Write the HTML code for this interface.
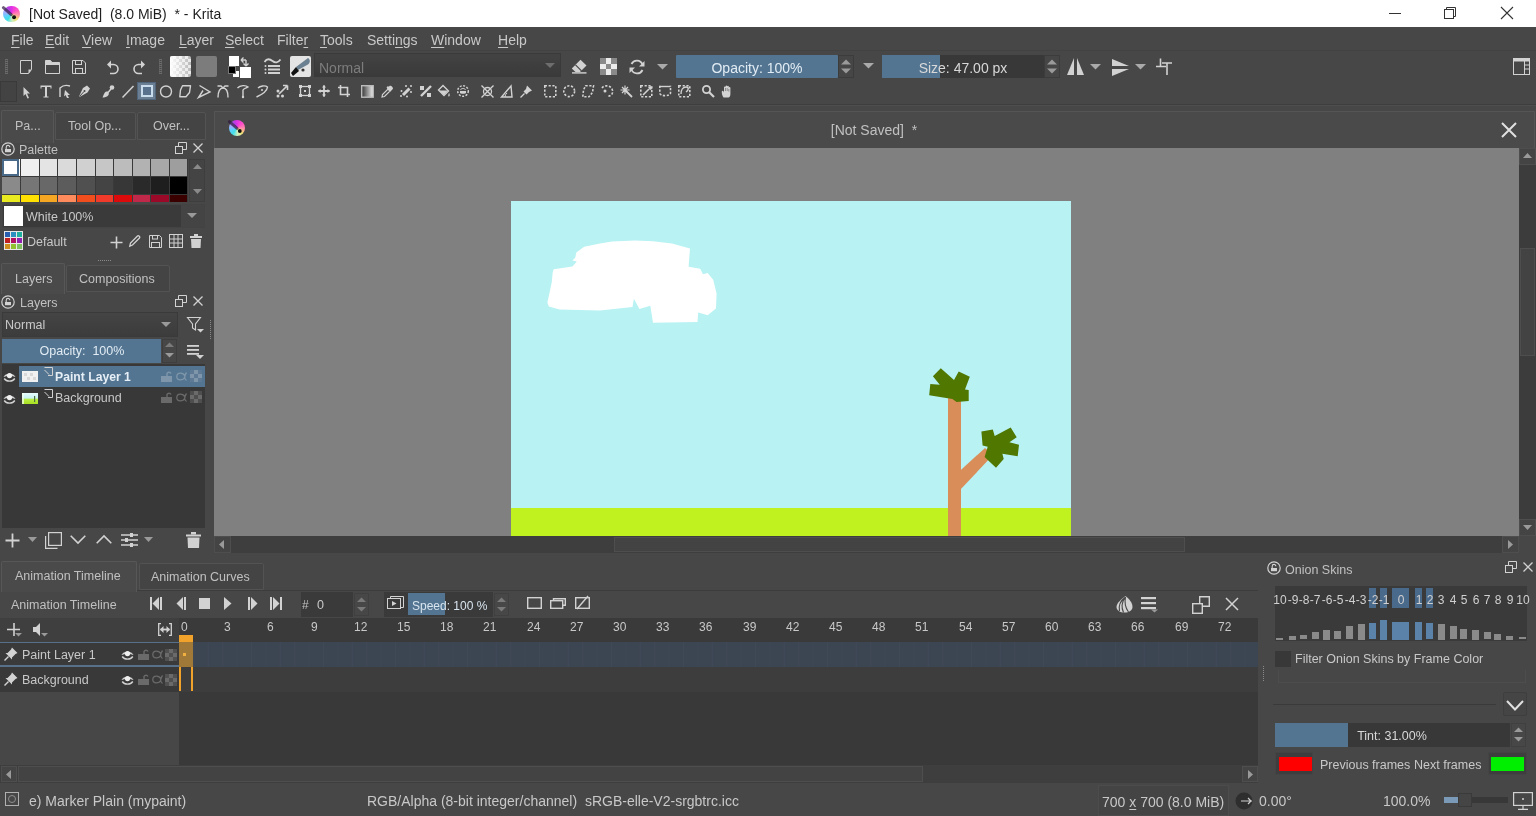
<!DOCTYPE html>
<html><head><meta charset="utf-8">
<style>
*{box-sizing:border-box;margin:0;padding:0}
html,body{width:1536px;height:816px;overflow:hidden;background:#474747;font-family:"Liberation Sans",sans-serif;color:#c8c8c8;font-size:13px;position:relative}
.a{position:absolute}
.t{position:absolute;white-space:nowrap;line-height:1;will-change:transform}
svg{position:absolute;overflow:visible}
u{text-decoration:underline;text-decoration-thickness:1px;text-underline-offset:1.5px}
</style></head><body>
<div class="a" style="left:0px;top:0px;width:1536px;height:27px;background:#ffffff;"></div>
<div class="a" style="left:3.4000000000000004px;top:5.700000000000001px;width:16.4px;height:16.4px;background:conic-gradient(from 0deg,#e030e8 0deg,#ff50c8 50deg,#ff90a8 95deg,#f0e070 135deg,#d0f0c0 175deg,#40e0e8 215deg,#60d0ff 250deg,#a8a8ff 290deg,#b040e0 330deg,#e030e8 360deg);border-radius:50%"></div>
<svg style="left:3.4000000000000004px;top:5.700000000000001px;" width="16.4" height="16.4" viewBox="0 0 16.4 16.4"><line x1="0.41" y1="1.64" x2="8.2" y2="8.61" stroke="#301840" stroke-width="2.9519999999999995" stroke-linecap="round" opacity="0.7"/><circle cx="11.07" cy="11.315999999999999" r="1.9679999999999997" fill="#101010"/></svg>
<div class="t" style="left:29px;top:6.95px;font-size:14px;color:#1e1e1e;">[Not Saved]&nbsp; (8.0 MiB)&nbsp; * - Krita</div>
<svg style="left:1389px;top:12px;" width="13" height="2" viewBox="0 0 13 2"><rect x="0" y="1" width="12" height="1" fill="#333"/></svg>
<svg style="left:1444px;top:7px;" width="12" height="12" viewBox="0 0 12 12"><rect x="0.5" y="2.5" width="9" height="9" fill="none" stroke="#333"/><path d="M2.5 2.5V0.5H11.5V9.5H9.5" fill="none" stroke="#333"/></svg>
<svg style="left:1501px;top:7px;" width="12" height="12" viewBox="0 0 12 12"><path d="M0 0L12 12M12 0L0 12" stroke="#333" stroke-width="1.1"/></svg>
<div class="a" style="left:0px;top:27px;width:1536px;height:24px;background:#474747;"></div>
<div class="a" style="left:0px;top:50px;width:1536px;height:1px;background:#424242;"></div>
<div class="t" style="left:11px;top:32.95px;font-size:14px;color:#c8c8c8;"><u>F</u>ile</div>
<div class="t" style="left:45px;top:32.95px;font-size:14px;color:#c8c8c8;"><u>E</u>dit</div>
<div class="t" style="left:82px;top:32.95px;font-size:14px;color:#c8c8c8;"><u>V</u>iew</div>
<div class="t" style="left:126px;top:32.95px;font-size:14px;color:#c8c8c8;"><u>I</u>mage</div>
<div class="t" style="left:179px;top:32.95px;font-size:14px;color:#c8c8c8;"><u>L</u>ayer</div>
<div class="t" style="left:225px;top:32.95px;font-size:14px;color:#c8c8c8;"><u>S</u>elect</div>
<div class="t" style="left:277px;top:32.95px;font-size:14px;color:#c8c8c8;">Filte<u>r</u></div>
<div class="t" style="left:320px;top:32.95px;font-size:14px;color:#c8c8c8;"><u>T</u>ools</div>
<div class="t" style="left:367px;top:32.95px;font-size:14px;color:#c8c8c8;">Setti<u>n</u>gs</div>
<div class="t" style="left:431px;top:32.95px;font-size:14px;color:#c8c8c8;"><u>W</u>indow</div>
<div class="t" style="left:498px;top:32.95px;font-size:14px;color:#c8c8c8;"><u>H</u>elp</div>
<svg style="left:5px;top:59px;" width="4" height="15" viewBox="0 0 4 15"><rect x="0" y="0" width="1" height="15" fill="#5a5a5a"/><rect x="2" y="0" width="1" height="15" fill="#5a5a5a"/><rect x="0" y="0" width="3" height="1" fill="#6a6a6a"/><rect x="0" y="2" width="3" height="1" fill="#6a6a6a"/><rect x="0" y="4" width="3" height="1" fill="#6a6a6a"/><rect x="0" y="6" width="3" height="1" fill="#6a6a6a"/><rect x="0" y="8" width="3" height="1" fill="#6a6a6a"/><rect x="0" y="10" width="3" height="1" fill="#6a6a6a"/><rect x="0" y="12" width="3" height="1" fill="#6a6a6a"/><rect x="0" y="14" width="3" height="1" fill="#6a6a6a"/></svg>
<svg style="left:20px;top:60px;" width="12" height="14" viewBox="0 0 12 14"><path d="M0.5 0.5H11.5V9.5L8.5 13.5H0.5Z" fill="none" stroke="#d2d2d2"/><path d="M11.5 9.5H8.5V13.5Z" fill="#d2d2d2"/></svg>
<svg style="left:45px;top:60px;" width="15" height="14" viewBox="0 0 15 14"><path d="M0.5 0.5H5.5L7 2.5H14.5V13.5H0.5Z" fill="none" stroke="#d2d2d2"/><path d="M0.5 0.5H5.5L7 2.5H14.5V5H0.5Z" fill="#d2d2d2"/></svg>
<svg style="left:72px;top:60px;" width="14" height="14" viewBox="0 0 14 14"><path d="M0.5 0.5H11L13.5 3V13.5H0.5Z" fill="none" stroke="#d2d2d2"/><rect x="3.5" y="0.5" width="6" height="4" fill="none" stroke="#d2d2d2"/><rect x="3.5" y="8.5" width="7" height="5" fill="none" stroke="#d2d2d2"/></svg>
<svg style="left:107px;top:60px;" width="12" height="14" viewBox="0 0 12 14"><path d="M2.5 4.5H6.5A4.5 4.5 0 0 1 6.5 13.5H3" fill="none" stroke="#d2d2d2" stroke-width="1.6"/><path d="M0 4.5L4 0.5V8.5Z" fill="#d2d2d2"/></svg>
<svg style="left:133px;top:60px;" width="12" height="14" viewBox="0 0 12 14"><path d="M9.5 4.5H5.5A4.5 4.5 0 0 0 5.5 13.5H9" fill="none" stroke="#d2d2d2" stroke-width="1.6"/><path d="M12 4.5L8 0.5V8.5Z" fill="#d2d2d2"/></svg>
<svg style="left:159px;top:59px;" width="4" height="15" viewBox="0 0 4 15"><rect x="0" y="0" width="1" height="15" fill="#5a5a5a"/><rect x="2" y="0" width="1" height="15" fill="#5a5a5a"/><rect x="0" y="0" width="3" height="1" fill="#6a6a6a"/><rect x="0" y="2" width="3" height="1" fill="#6a6a6a"/><rect x="0" y="4" width="3" height="1" fill="#6a6a6a"/><rect x="0" y="6" width="3" height="1" fill="#6a6a6a"/><rect x="0" y="8" width="3" height="1" fill="#6a6a6a"/><rect x="0" y="10" width="3" height="1" fill="#6a6a6a"/><rect x="0" y="12" width="3" height="1" fill="#6a6a6a"/><rect x="0" y="14" width="3" height="1" fill="#6a6a6a"/></svg>
<svg style="left:170px;top:56px;" width="21" height="21" viewBox="0 0 21 21"><defs><pattern id="chk" width="6" height="6" patternUnits="userSpaceOnUse"><rect width="6" height="6" fill="#e8e8e8"/><rect width="3" height="3" fill="#b8b8b8"/><rect x="3" y="3" width="3" height="3" fill="#b8b8b8"/></pattern>
<linearGradient id="gw" x1="0" x2="1"><stop offset="0" stop-color="#fff"/><stop offset="1" stop-color="#fff" stop-opacity="0"/></linearGradient></defs>
<rect width="21" height="21" rx="2" fill="url(#chk)"/><rect width="21" height="21" rx="2" fill="url(#gw)"/></svg>
<div class="a" style="left:196px;top:56px;width:21px;height:21px;background:#7c7c7c;border-radius:2px"></div>
<div class="a" style="left:229px;top:56px;width:10px;height:10px;background:#ffffff;"></div>
<div class="a" style="left:240px;top:67px;width:11px;height:11px;background:#ffffff;"></div>
<div class="a" style="left:233px;top:71px;width:6px;height:6px;background:#ffffff;"></div>
<div class="a" style="left:229px;top:67px;width:6px;height:6px;background:#000000;outline:1px solid #777"></div>
<svg style="left:240px;top:57px;" width="10" height="10" viewBox="0 0 10 10"><path d="M1 3H6M1 3L3.5 0.5M1 3L3.5 5.5" stroke="#d2d2d2" stroke-width="1.4" fill="none"/><path d="M6 3V9M6 9L3.5 6.5M6 9L8.5 6.5" stroke="#d2d2d2" stroke-width="1.4" fill="none"/></svg>
<svg style="left:264px;top:58px;" width="17" height="17" viewBox="0 0 17 17"><path d="M0.5 4C3 0 6 1 8.5 3S14 5 16.5 1.5" stroke="#d2d2d2" stroke-width="1.8" fill="none"/><circle cx="1.5" cy="8" r="1" fill="#d2d2d2"/><circle cx="1.5" cy="11.5" r="1" fill="#d2d2d2"/><circle cx="1.5" cy="15" r="1" fill="#d2d2d2"/><rect x="4" y="7" width="12" height="2" fill="#d2d2d2"/><rect x="4" y="10.5" width="12" height="2" fill="#d2d2d2"/><rect x="4" y="14" width="12" height="2" fill="#d2d2d2"/></svg>
<svg style="left:290px;top:56px;" width="21" height="21" viewBox="0 0 21 21"><rect width="21" height="21" rx="2" fill="#e4e4e4"/><path d="M18 2C21 4 20 8 17 9L8 14L6 11Z" fill="#6b8090"/><path d="M6 11L9 15L3 20L1 17Z" fill="#111"/><circle cx="13" cy="14" r="1.6" fill="#333"/></svg>
<div class="a" style="left:314px;top:53px;width:247px;height:24px;background:linear-gradient(#434343,#3a3a3a);border:1px solid #3a3a3a"></div>
<div class="t" style="left:319px;top:60.95px;font-size:14px;color:#7d7d7d;">Normal</div>
<svg style="left:545px;top:63px;" width="10" height="6" viewBox="0 0 10 6"><path d="M0 0H10L5 5Z" fill="#6e6e6e"/></svg>
<svg style="left:571px;top:59px;" width="16" height="15" viewBox="0 0 16 15"><path d="M0.8 9.5L9.5 0.8L15.5 6.5L9 13H4.5Z" fill="#d2d2d2"/><path d="M4.5 5.8L10.5 11.8" stroke="#474747" stroke-width="1.2"/><rect x="1" y="13.2" width="14.5" height="1.4" fill="#d2d2d2"/></svg>
<svg style="left:600px;top:58px;" width="17" height="17" viewBox="0 0 17 17"><rect width="17" height="17" fill="#ececec"/><rect x="0" y="0" width="6" height="6" fill="#8a8a8a"/><rect x="11" y="0" width="6" height="6" fill="#8a8a8a"/><rect x="6" y="6" width="5" height="5" fill="#8a8a8a"/><rect x="0" y="11" width="6" height="6" fill="#8a8a8a"/><rect x="11" y="11" width="6" height="6" fill="#8a8a8a"/></svg>
<svg style="left:629px;top:59px;" width="16" height="16" viewBox="0 0 16 16"><path d="M13.5 5.5A6 6 0 0 0 2.5 5" stroke="#d2d2d2" stroke-width="1.8" fill="none"/><path d="M2.5 10.5A6 6 0 0 0 13.5 11" stroke="#d2d2d2" stroke-width="1.8" fill="none"/><path d="M15.5 2V7.5H10Z" fill="#d2d2d2"/><path d="M0.5 14V8.5H6Z" fill="#d2d2d2"/></svg>
<svg style="left:657px;top:64px;" width="11" height="6" viewBox="0 0 11 6"><path d="M0 0H11L5.5 5.5Z" fill="#aaaaaa"/></svg>
<div class="a" style="left:676px;top:55px;width:162px;height:23px;background:#537591;border-radius:1px"></div>
<div class="t" style="left:457px;width:600px;text-align:center;top:60.65px;font-size:14px;color:#e2ecf4;">Opacity: 100%</div>
<div class="a" style="left:838px;top:55px;width:16px;height:23px;background:#464646;border:1px solid #3c3c3c"></div>
<svg style="left:841px;top:59.0px;" width="10" height="15" viewBox="0 0 10 15"><path d="M0 5.5L5 0.5L10 5.5Z" fill="#9a9a9a"/><path d="M0 9.5H10L5 14.5Z" fill="#9a9a9a"/></svg>
<svg style="left:863px;top:63px;" width="11" height="6" viewBox="0 0 11 6"><path d="M0 0H11L5.5 5.5Z" fill="#aaaaaa"/></svg>
<div class="a" style="left:882px;top:55px;width:162px;height:23px;background:#383838;"></div>
<div class="a" style="left:882px;top:55px;width:58px;height:23px;background:#537591;"></div>
<div class="t" style="left:663px;width:600px;text-align:center;top:60.65px;font-size:14px;color:#d8d8d8;">Size: 47.00 px</div>
<div class="a" style="left:1044px;top:55px;width:16px;height:23px;background:#464646;border:1px solid #3c3c3c"></div>
<svg style="left:1047px;top:59.0px;" width="10" height="15" viewBox="0 0 10 15"><path d="M0 5.5L5 0.5L10 5.5Z" fill="#9a9a9a"/><path d="M0 9.5H10L5 14.5Z" fill="#9a9a9a"/></svg>
<svg style="left:1067px;top:58px;" width="17" height="17" viewBox="0 0 17 17"><path d="M7 0V17H0Z" fill="#d2d2d2"/><path d="M10 0V17H17Z" fill="#d2d2d2"/></svg>
<svg style="left:1090px;top:64px;" width="11" height="6" viewBox="0 0 11 6"><path d="M0 0H11L5.5 5.5Z" fill="#aaaaaa"/></svg>
<svg style="left:1112px;top:59px;" width="17" height="17" viewBox="0 0 17 17"><path d="M0 0L17 7H0Z" fill="#d2d2d2"/><path d="M0 10H17L0 17Z" fill="#d2d2d2"/></svg>
<svg style="left:1135px;top:64px;" width="11" height="6" viewBox="0 0 11 6"><path d="M0 0H11L5.5 5.5Z" fill="#aaaaaa"/></svg>
<svg style="left:1156px;top:58px;" width="17" height="17" viewBox="0 0 17 17"><path d="M0 8.5H10M4.5 0.5V8.5M4.5 8.5" stroke="#d2d2d2" stroke-width="1.6" fill="none"/><path d="M6 5H16M11 5V17" stroke="#d2d2d2" stroke-width="1.6" fill="none"/></svg>
<svg style="left:1513px;top:58px;" width="17" height="17" viewBox="0 0 17 17"><rect x="0.5" y="0.5" width="16" height="16" fill="none" stroke="#d2d2d2"/><rect x="0.5" y="0.5" width="16" height="3" fill="#d2d2d2"/><path d="M11.5 0.5V16.5M11.5 7H16.5M11.5 11H16.5" stroke="#d2d2d2" fill="none"/></svg>
<div class="a" style="left:0px;top:81px;width:17px;height:21px;background:#434343;border:1px solid #3a3a3a"></div>
<svg style="left:23px;top:86px;" width="13" height="13" viewBox="0 0 13 13"><path d="M0.5 1L7 7.5H4L6 12L4.5 12.5L2.5 8L0.5 10Z" fill="#d2d2d2"/></svg>
<svg style="left:40px;top:85px;" width="13" height="13" viewBox="0 0 13 13"><path d="M0.5 0.5H11.5V3.5H10.5V2H7V11.5H8.5V12.5H3.5V11.5H5V2H1.5V3.5H0.5Z" fill="#d2d2d2"/></svg>
<svg style="left:59px;top:85px;" width="13" height="13" viewBox="0 0 13 13"><path d="M1 12V3C4 0 8 0 11 1" stroke="#d2d2d2" stroke-width="1.4" fill="none"/><path d="M6 5L11 10H8.5L10 13H8L6.5 10L5 11.5Z" fill="#d2d2d2"/></svg>
<svg style="left:78px;top:85px;" width="13" height="13" viewBox="0 0 13 13"><path d="M1 11.5L5 3L9 0.5L12 3.5L9.5 7.5L1.5 12Z" fill="#d2d2d2"/><path d="M1.5 11.5L6 6.5" stroke="#474747" stroke-width="1"/><circle cx="6.5" cy="6" r="1" fill="#474747"/></svg>
<svg style="left:102px;top:85px;" width="13" height="13" viewBox="0 0 13 13"><circle cx="10" cy="2.5" r="2.3" fill="#d2d2d2"/><path d="M9 4L6 7.5" stroke="#d2d2d2" stroke-width="1.5"/><path d="M4.5 6.5C6.5 6 7.5 8 6.5 10C5.5 12 2 12.5 0.5 12.5C1.5 11 2 7 4.5 6.5Z" fill="#d2d2d2"/></svg>
<svg style="left:122px;top:85px;" width="13" height="13" viewBox="0 0 13 13"><path d="M0.5 12.5L11.5 1" stroke="#d2d2d2" stroke-width="1.5"/></svg>
<div class="a" style="left:137px;top:82px;width:19px;height:18px;background:#6a7f94;border:1px solid #50647a"></div>
<div class="a" style="left:141px;top:85px;width:12px;height:12px;background:#58728e;border:2px solid #c8dcec"></div>
<svg style="left:160px;top:85px;" width="13" height="13" viewBox="0 0 13 13"><circle cx="6" cy="6.5" r="5.5" fill="none" stroke="#d2d2d2" stroke-width="1.4"/></svg>
<svg style="left:179px;top:85px;" width="13" height="13" viewBox="0 0 13 13"><path d="M3.5 0.8H11.5L10.5 7.5L7 11.8H0.8L1.5 5Z" fill="none" stroke="#d2d2d2" stroke-width="1.4" stroke-linejoin="round"/></svg>
<svg style="left:198px;top:85px;" width="13" height="13" viewBox="0 0 13 13"><path d="M1.5 0.5L12 7L0.5 12.5L5 5.5" fill="none" stroke="#d2d2d2" stroke-width="1.4"/></svg>
<svg style="left:217px;top:85px;" width="13" height="13" viewBox="0 0 13 13"><path d="M1 12.5C1 6 3 3 6 3S11 6 11 12.5" fill="none" stroke="#d2d2d2" stroke-width="1.4"/><path d="M0.5 1H4L6 3L8 1H11.5" fill="none" stroke="#d2d2d2" stroke-width="1.4"/></svg>
<svg style="left:237px;top:85px;" width="13" height="13" viewBox="0 0 13 13"><path d="M0.5 3C3 0 9 0 11 2C9.5 3 7 3 6 5V12" fill="none" stroke="#d2d2d2" stroke-width="1.4"/><circle cx="6" cy="12" r="1.2" fill="#d2d2d2"/></svg>
<svg style="left:256px;top:85px;" width="13" height="13" viewBox="0 0 13 13"><path d="M0.5 12C5 10 11 7 11.5 2C9 0 4 1 2 3" fill="none" stroke="#d2d2d2" stroke-width="1.4"/><circle cx="6" cy="5" r="1" fill="#d2d2d2"/></svg>
<svg style="left:276px;top:85px;" width="13" height="13" viewBox="0 0 13 13"><path d="M3 9L11.5 0.5M11.5 0.5V5M11.5 0.5H7" stroke="#d2d2d2" stroke-width="1.6" fill="none"/><circle cx="2" cy="6" r="1.5" fill="#d2d2d2"/><circle cx="2" cy="11" r="1.5" fill="#d2d2d2"/><circle cx="6.5" cy="11" r="1.5" fill="#d2d2d2"/></svg>
<svg style="left:299px;top:85px;" width="13" height="13" viewBox="0 0 13 13"><rect x="1.5" y="1.5" width="9" height="9" fill="none" stroke="#d2d2d2" stroke-width="1.3"/><rect x="0" y="0" width="3" height="3" fill="#d2d2d2"/><rect x="9" y="0" width="3" height="3" fill="#d2d2d2"/><rect x="0" y="9" width="3" height="3" fill="#d2d2d2"/><rect x="9" y="9" width="3" height="3" fill="#d2d2d2"/><rect x="5" y="5" width="2" height="2" fill="#d2d2d2"/></svg>
<svg style="left:318px;top:85px;" width="13" height="13" viewBox="0 0 13 13"><path d="M6 0.5V11.5M0.5 6H11.5" stroke="#d2d2d2" stroke-width="1.8"/><path d="M6 0L4 2.5H8ZM6 12L4 9.5H8ZM0 6L2.5 4V8ZM12 6L9.5 4V8Z" fill="#d2d2d2"/></svg>
<svg style="left:338px;top:85px;" width="13" height="13" viewBox="0 0 13 13"><path d="M2.5 0V9.5H12M0 2.5H9.5V12" stroke="#d2d2d2" stroke-width="1.6" fill="none"/></svg>
<svg style="left:361px;top:85px;" width="13" height="13" viewBox="0 0 13 13"><defs><linearGradient id="grd" x1="0" x2="1"><stop offset="0" stop-color="#333"/><stop offset="1" stop-color="#eee"/></linearGradient></defs><rect x="0.7" y="0.7" width="11.5" height="11.5" fill="url(#grd)" stroke="#bbb" stroke-width="1.4"/></svg>
<svg style="left:381px;top:85px;" width="13" height="13" viewBox="0 0 13 13"><path d="M1 12L1.5 9.5L7 4L9 6L3.5 11.5Z" fill="none" stroke="#d2d2d2" stroke-width="1.2"/><path d="M6 3.5L8.5 1C9.5 -0.3 12.8 2.5 11.8 4L9.5 6.5Z" fill="#d2d2d2"/><rect x="5.5" y="2.5" width="5" height="2" transform="rotate(45 8 3.5)" fill="#d2d2d2"/></svg>
<svg style="left:400px;top:85px;" width="13" height="13" viewBox="0 0 13 13"><path d="M3 10L9.5 3.5" stroke="#d2d2d2" stroke-width="3"/><circle cx="1.5" cy="6" r="1" fill="#d2d2d2"/><circle cx="6" cy="1" r="1" fill="#d2d2d2"/><circle cx="11" cy="7" r="1" fill="#d2d2d2"/><circle cx="7" cy="11.5" r="1" fill="#d2d2d2"/><circle cx="11" cy="1" r="1" fill="#d2d2d2"/><circle cx="1" cy="11" r="1" fill="#d2d2d2"/></svg>
<svg style="left:420px;top:85px;" width="13" height="13" viewBox="0 0 13 13"><path d="M1 11L11 1" stroke="#d2d2d2" stroke-width="2.4"/><rect x="0" y="1" width="4" height="4" fill="#d2d2d2"/><rect x="7" y="8" width="4" height="4" fill="#d2d2d2"/></svg>
<svg style="left:438px;top:85px;" width="13" height="13" viewBox="0 0 13 13"><path d="M5 0.5L10.5 6L6 10.5L0.5 5Z" fill="none" stroke="#d2d2d2" stroke-width="1.4"/><path d="M1 5.5H10L6 10Z" fill="#d2d2d2"/><path d="M11 8C12 9.5 12 11 11 11.5S10 9.5 11 8Z" fill="#d2d2d2"/></svg>
<svg style="left:457px;top:85px;" width="13" height="13" viewBox="0 0 13 13"><circle cx="6" cy="6" r="5.3" fill="none" stroke="#d2d2d2" stroke-width="1.5" stroke-dasharray="2 1.5"/><path d="M3 6H9V8C9 9 3 9 3 8Z" fill="#d2d2d2"/><path d="M3.5 5C4 3 8 3 8.5 5" stroke="#d2d2d2" fill="none"/></svg>
<svg style="left:481px;top:85px;" width="13" height="13" viewBox="0 0 13 13"><circle cx="6.5" cy="6.5" r="4" fill="none" stroke="#d2d2d2" stroke-width="1.3"/><path d="M0.5 0.5L12.5 12.5M12.5 0.5L0.5 12.5" stroke="#d2d2d2" stroke-width="1.4"/></svg>
<svg style="left:501px;top:85px;" width="13" height="13" viewBox="0 0 13 13"><path d="M0.5 12H11L10 1Z" fill="none" stroke="#d2d2d2" stroke-width="1.4"/><path d="M4 12A5 5 0 0 1 6 8" stroke="#d2d2d2" fill="none"/></svg>
<svg style="left:520px;top:85px;" width="13" height="13" viewBox="0 0 13 13"><path d="M7 0.5L12 5.5L9 7L6.5 9.5L3.5 6.5L6 4Z" fill="#d2d2d2"/><path d="M0.5 12.5L4.5 8.5" stroke="#d2d2d2" stroke-width="1.2"/></svg>
<svg style="left:544px;top:85px;" width="13" height="13" viewBox="0 0 13 13"><rect x="0.8" y="0.8" width="11" height="11" fill="none" stroke="#d2d2d2" stroke-width="1.6" stroke-dasharray="2.2 1.6"/></svg>
<svg style="left:563px;top:85px;" width="13" height="13" viewBox="0 0 13 13"><circle cx="6.2" cy="6.2" r="5.4" fill="none" stroke="#d2d2d2" stroke-width="1.6" stroke-dasharray="2.2 1.6"/></svg>
<svg style="left:582px;top:85px;" width="13" height="13" viewBox="0 0 13 13"><path d="M3.5 0.8H11.5L10.5 7.5L7 11.8H0.8L1.5 5Z" fill="none" stroke="#d2d2d2" stroke-width="1.6" stroke-dasharray="2.2 1.6"/></svg>
<svg style="left:601px;top:85px;" width="13" height="13" viewBox="0 0 13 13"><path d="M1 3C3 0 9 0 11 4S10 12 6 11" fill="none" stroke="#d2d2d2" stroke-width="1.6" stroke-dasharray="2.2 1.6"/><circle cx="4" cy="6" r="1.5" fill="#d2d2d2"/></svg>
<svg style="left:620px;top:85px;" width="13" height="13" viewBox="0 0 13 13"><path d="M5 5L12 12" stroke="#d2d2d2" stroke-width="1.8"/><path d="M5 0.5V9.5M0.5 5H9.5M2 2L8 8M8 2L2 8" stroke="#d2d2d2" stroke-width="1.2"/></svg>
<svg style="left:640px;top:85px;" width="13" height="13" viewBox="0 0 13 13"><rect x="0.8" y="0.8" width="11" height="11" fill="none" stroke="#d2d2d2" stroke-width="1.6" stroke-dasharray="2.2 1.6"/><path d="M3 10L9 4" stroke="#d2d2d2" stroke-width="1.6"/><path d="M8 2L11 1L12 4L10 5Z" fill="#d2d2d2"/></svg>
<svg style="left:659px;top:85px;" width="13" height="13" viewBox="0 0 13 13"><path d="M0.8 0.8V8C0.8 11.5 11.5 11.5 11.5 8V0.8" fill="none" stroke="#d2d2d2" stroke-width="1.6" stroke-dasharray="2.2 1.6"/><path d="M0.8 1.5H11.5" stroke="#d2d2d2" stroke-width="1.4"/></svg>
<svg style="left:678px;top:85px;" width="13" height="13" viewBox="0 0 13 13"><rect x="0.8" y="0.8" width="11" height="11" fill="none" stroke="#d2d2d2" stroke-width="1.6" stroke-dasharray="2.2 1.6"/><path d="M3 9C3 5 5 2 8 2S11 5 8 7" stroke="#d2d2d2" stroke-width="1.4" fill="none"/></svg>
<svg style="left:702px;top:85px;" width="13" height="13" viewBox="0 0 13 13"><circle cx="4.5" cy="4.5" r="3.6" fill="none" stroke="#d2d2d2" stroke-width="1.8"/><path d="M7 7L12 12" stroke="#d2d2d2" stroke-width="2.2"/></svg>
<svg style="left:721px;top:85px;" width="13" height="13" viewBox="0 0 13 13"><path d="M2.5 12.5C1.5 11 0.5 8.5 0.8 6.5C1 5.5 2.2 5.5 2.6 6.5L3 7.5V2.2C3 1.2 4.5 1.2 4.5 2.2V6V1.2C4.5 0.2 6.2 0.2 6.2 1.2V6V1.5C6.2 0.5 7.8 0.5 7.8 1.5V6.5V2.8C7.8 1.8 9.4 1.8 9.4 2.8V9C9.4 11 8.5 12.5 7.5 12.5Z" fill="#d2d2d2"/><path d="M4.5 6V3M6.2 6V3M7.8 6.5V4" stroke="#474747" stroke-width="0.5"/></svg>
<div class="a" style="left:762px;top:106px;width:1px;height:1px;background:#8a8a8a;"></div>
<div class="a" style="left:764px;top:106px;width:1px;height:1px;background:#8a8a8a;"></div>
<div class="a" style="left:766px;top:106px;width:1px;height:1px;background:#8a8a8a;"></div>
<div class="a" style="left:768px;top:106px;width:1px;height:1px;background:#8a8a8a;"></div>
<div class="a" style="left:770px;top:106px;width:1px;height:1px;background:#8a8a8a;"></div>
<div class="a" style="left:772px;top:106px;width:1px;height:1px;background:#8a8a8a;"></div>
<div class="a" style="left:774px;top:106px;width:1px;height:1px;background:#8a8a8a;"></div>
<div class="a" style="left:776px;top:106px;width:1px;height:1px;background:#8a8a8a;"></div>
<div class="a" style="left:0px;top:103px;width:213px;height:7px;background:#474747;"></div>
<div class="a" style="left:1px;top:110px;width:53px;height:33px;background:#4a4a4a;border:1px solid #575757;border-bottom:none;border-radius:2px 2px 0 0"></div>
<div class="a" style="left:55px;top:112px;width:81px;height:28px;background:#444444;border:1px solid #535353;border-radius:2px 2px 0 0"></div>
<div class="a" style="left:137px;top:112px;width:69px;height:28px;background:#444444;border:1px solid #535353;border-radius:2px 2px 0 0"></div>
<div class="t" style="left:15px;top:120.42px;font-size:12.5px;color:#c0c0c0;">Pa...</div>
<div class="t" style="left:68px;top:120.42px;font-size:12.5px;color:#c0c0c0;">Tool Op...</div>
<div class="t" style="left:153px;top:120.42px;font-size:12.5px;color:#c0c0c0;">Over...</div>
<svg style="left:1px;top:142px;" width="14" height="14" viewBox="0 0 14 14"><circle cx="7" cy="7" r="6.2" fill="none" stroke="#d2d2d2" stroke-width="1.2"/><rect x="4" y="7" width="6" height="3.2" fill="#d2d2d2"/><path d="M5.2 7V5.2A1.8 1.8 0 0 1 8.8 5.2" fill="none" stroke="#d2d2d2" stroke-width="1.1"/></svg>
<div class="t" style="left:19px;top:144.42px;font-size:12.5px;color:#c0c0c0;">Palette</div>
<svg style="left:175px;top:142px;" width="13" height="12" viewBox="0 0 13 12"><rect x="0.5" y="4.5" width="7" height="7" fill="none" stroke="#d2d2d2"/><path d="M3.5 4.5V0.5H11.5V7.5H7.5" fill="none" stroke="#d2d2d2"/></svg>
<svg style="left:193px;top:143px;" width="10" height="10" viewBox="0 0 10 10"><path d="M0.5 0.5L9.5 9.5M9.5 0.5L0.5 9.5" stroke="#d2d2d2" stroke-width="1.3"/></svg>
<div class="a" style="left:2px;top:159px;width:186px;height:43px;background:#3a3a3a;"></div>
<div class="a" style="left:2px;top:159px;width:18px;height:17px;background:#ffffff;"></div>
<div class="a" style="left:2px;top:177px;width:18px;height:17px;background:#8a8a8a;"></div>
<div class="a" style="left:2px;top:195px;width:18px;height:7px;background:#eaea20;"></div>
<div class="a" style="left:21px;top:159px;width:18px;height:17px;background:#f0f0f0;"></div>
<div class="a" style="left:21px;top:177px;width:18px;height:17px;background:#767676;"></div>
<div class="a" style="left:21px;top:195px;width:18px;height:7px;background:#ffe000;"></div>
<div class="a" style="left:40px;top:159px;width:17px;height:17px;background:#e4e4e4;"></div>
<div class="a" style="left:40px;top:177px;width:17px;height:17px;background:#686868;"></div>
<div class="a" style="left:40px;top:195px;width:17px;height:7px;background:#f5a623;"></div>
<div class="a" style="left:58px;top:159px;width:18px;height:17px;background:#dadada;"></div>
<div class="a" style="left:58px;top:177px;width:18px;height:17px;background:#5c5c5c;"></div>
<div class="a" style="left:58px;top:195px;width:18px;height:7px;background:#ff8a5c;"></div>
<div class="a" style="left:77px;top:159px;width:18px;height:17px;background:#d0d0d0;"></div>
<div class="a" style="left:77px;top:177px;width:18px;height:17px;background:#505050;"></div>
<div class="a" style="left:77px;top:195px;width:18px;height:7px;background:#f24d1c;"></div>
<div class="a" style="left:96px;top:159px;width:17px;height:17px;background:#c6c6c6;"></div>
<div class="a" style="left:96px;top:177px;width:17px;height:17px;background:#444444;"></div>
<div class="a" style="left:96px;top:195px;width:17px;height:7px;background:#f23a2a;"></div>
<div class="a" style="left:114px;top:159px;width:18px;height:17px;background:#bcbcbc;"></div>
<div class="a" style="left:114px;top:177px;width:18px;height:17px;background:#373737;"></div>
<div class="a" style="left:114px;top:195px;width:18px;height:7px;background:#dc0a0a;"></div>
<div class="a" style="left:133px;top:159px;width:17px;height:17px;background:#b2b2b2;"></div>
<div class="a" style="left:133px;top:177px;width:17px;height:17px;background:#2a2a2a;"></div>
<div class="a" style="left:133px;top:195px;width:17px;height:7px;background:#c0284a;"></div>
<div class="a" style="left:151px;top:159px;width:18px;height:17px;background:#a8a8a8;"></div>
<div class="a" style="left:151px;top:177px;width:18px;height:17px;background:#1e1e1e;"></div>
<div class="a" style="left:151px;top:195px;width:18px;height:7px;background:#9a0a28;"></div>
<div class="a" style="left:170px;top:159px;width:17px;height:17px;background:#9e9e9e;"></div>
<div class="a" style="left:170px;top:177px;width:17px;height:17px;background:#000000;"></div>
<div class="a" style="left:170px;top:195px;width:17px;height:7px;background:#3a0000;"></div>
<div class="a" style="left:2px;top:159px;width:17px;height:17px;background:#ffffff;border:2px solid #4a6a8a"></div>
<div class="a" style="left:189px;top:159px;width:16px;height:43px;background:#444444;border:1px solid #3e3e3e"></div>
<svg style="left:193px;top:164px;" width="9" height="5" viewBox="0 0 9 5"><path d="M0 5L4.5 0L9 5Z" fill="#8a8a8a"/></svg>
<svg style="left:193px;top:189px;" width="9" height="5" viewBox="0 0 9 5"><path d="M0 0H9L4.5 5Z" fill="#8a8a8a"/></svg>
<div class="a" style="left:2px;top:204px;width:203px;height:24px;background:#3a3a3a;border:1px solid #434343"></div>
<div class="a" style="left:181px;top:205px;width:23px;height:22px;background:#444444;"></div>
<svg style="left:187px;top:213px;" width="10" height="5" viewBox="0 0 10 5"><path d="M0 0H10L5 5Z" fill="#9a9a9a"/></svg>
<div class="a" style="left:4px;top:206px;width:19px;height:20px;background:#ffffff;"></div>
<div class="t" style="left:26px;top:210.92px;font-size:12.5px;color:#c8c8c8;">White 100%</div>
<svg style="left:4px;top:231px;" width="19" height="19" viewBox="0 0 19 19"><rect x="0" y="0" width="19" height="19" fill="#e8e8e8"/>
<rect x="1" y="1" width="5" height="5" fill="#2a5fb0"/><rect x="7" y="1" width="5" height="5" fill="#2a90c0"/><rect x="13" y="1" width="5" height="5" fill="#20b0a0"/>
<rect x="1" y="7" width="5" height="5" fill="#c02020"/><rect x="7" y="7" width="5" height="5" fill="#b01060"/><rect x="13" y="7" width="5" height="5" fill="#9020b0"/>
<rect x="1" y="13" width="5" height="5" fill="#d09020"/><rect x="7" y="13" width="5" height="5" fill="#90c030"/><rect x="13" y="13" width="5" height="5" fill="#80c060"/></svg>
<div class="t" style="left:27px;top:235.92px;font-size:12.5px;color:#c8c8c8;">Default</div>
<svg style="left:110px;top:236px;" width="13" height="13" viewBox="0 0 13 13"><path d="M6.5 0.5V12.5M0.5 6.5H12.5" stroke="#d2d2d2" stroke-width="1.6"/></svg>
<svg style="left:129px;top:235px;" width="12" height="12" viewBox="0 0 12 12"><path d="M0.8 11.2L1.5 8L8.5 1C9.5 0 11.5 2 10.5 3L3.5 10Z" fill="none" stroke="#d2d2d2" stroke-width="1.3"/></svg>
<svg style="left:149px;top:235px;" width="13" height="13" viewBox="0 0 13 13"><path d="M0.5 0.5H10.5L12.5 2.5V12.5H0.5Z" fill="none" stroke="#d2d2d2"/><rect x="3.5" y="0.5" width="5" height="3.5" fill="none" stroke="#d2d2d2"/><rect x="2.5" y="7.5" width="8" height="5" fill="none" stroke="#d2d2d2"/></svg>
<svg style="left:169px;top:234px;" width="14" height="14" viewBox="0 0 14 14"><rect x="0.5" y="0.5" width="13" height="13" fill="none" stroke="#d2d2d2"/><path d="M5 0.5V13.5M9 0.5V13.5M0.5 5H13.5M0.5 9H13.5" stroke="#d2d2d2"/></svg>
<svg style="left:190px;top:234px;" width="12" height="14" viewBox="0 0 12 14"><rect x="0" y="2" width="12" height="2" fill="#d2d2d2"/><rect x="4" y="0" width="4" height="2" fill="#d2d2d2"/><path d="M1 5H11L10.5 14H1.5Z" fill="#d2d2d2"/></svg>
<div class="a" style="left:98px;top:260px;width:1px;height:1px;background:#8a8a8a;"></div>
<div class="a" style="left:100px;top:260px;width:1px;height:1px;background:#8a8a8a;"></div>
<div class="a" style="left:102px;top:260px;width:1px;height:1px;background:#8a8a8a;"></div>
<div class="a" style="left:104px;top:260px;width:1px;height:1px;background:#8a8a8a;"></div>
<div class="a" style="left:106px;top:260px;width:1px;height:1px;background:#8a8a8a;"></div>
<div class="a" style="left:108px;top:260px;width:1px;height:1px;background:#8a8a8a;"></div>
<div class="a" style="left:110px;top:260px;width:1px;height:1px;background:#8a8a8a;"></div>
<div class="a" style="left:1px;top:263px;width:64px;height:31px;background:#4a4a4a;border:1px solid #575757;border-bottom:none;border-radius:2px 2px 0 0"></div>
<div class="a" style="left:66px;top:265px;width:104px;height:27px;background:#444444;border:1px solid #535353;border-radius:2px 2px 0 0"></div>
<div class="t" style="left:15px;top:272.92px;font-size:12.5px;color:#c0c0c0;">Layers</div>
<div class="t" style="left:79px;top:272.92px;font-size:12.5px;color:#c0c0c0;">Compositions</div>
<svg style="left:1px;top:295px;" width="14" height="14" viewBox="0 0 14 14"><circle cx="7" cy="7" r="6.2" fill="none" stroke="#d2d2d2" stroke-width="1.2"/><rect x="4" y="7" width="6" height="3.2" fill="#d2d2d2"/><path d="M5.2 7V5.2A1.8 1.8 0 0 1 8.8 5.2" fill="none" stroke="#d2d2d2" stroke-width="1.1"/></svg>
<div class="t" style="left:20px;top:297.42px;font-size:12.5px;color:#c0c0c0;">Layers</div>
<svg style="left:175px;top:295px;" width="13" height="12" viewBox="0 0 13 12"><rect x="0.5" y="4.5" width="7" height="7" fill="none" stroke="#d2d2d2"/><path d="M3.5 4.5V0.5H11.5V7.5H7.5" fill="none" stroke="#d2d2d2"/></svg>
<svg style="left:193px;top:296px;" width="10" height="10" viewBox="0 0 10 10"><path d="M0.5 0.5L9.5 9.5M9.5 0.5L0.5 9.5" stroke="#d2d2d2" stroke-width="1.3"/></svg>
<div class="a" style="left:2px;top:312px;width:176px;height:25px;background:linear-gradient(#444,#3c3c3c);border:1px solid #3a3a3a"></div>
<div class="t" style="left:5px;top:319.42px;font-size:12.5px;color:#c8c8c8;">Normal</div>
<svg style="left:161px;top:322px;" width="10" height="5" viewBox="0 0 10 5"><path d="M0 0H10L5 5Z" fill="#9a9a9a"/></svg>
<svg style="left:187px;top:317px;" width="18" height="16" viewBox="0 0 18 16"><path d="M0.5 0.5H13.5L8.5 7V13L5.5 11V7Z" fill="none" stroke="#d2d2d2" stroke-width="1.1"/><path d="M10 12H17L13.5 15.5Z" fill="#d2d2d2"/></svg>
<div class="a" style="left:2px;top:339px;width:159px;height:24px;background:#537591;"></div>
<div class="a" style="left:162px;top:339px;width:15px;height:24px;background:#474747;border:1px solid #3e3e3e"></div>
<svg style="left:165px;top:342px;" width="9" height="17" viewBox="0 0 9 17"><path d="M0 5L4.5 0.5L9 5Z" fill="#7a7a7a"/><path d="M0 11H9L4.5 15.5Z" fill="#9a9a9a"/></svg>
<div class="t" style="left:-218px;width:600px;text-align:center;top:345.42px;font-size:12.5px;color:#e2ecf4;">Opacity:&nbsp; 100%</div>
<svg style="left:187px;top:345px;" width="17" height="15" viewBox="0 0 17 15"><rect x="0" y="0" width="12" height="1.8" fill="#d2d2d2"/><rect x="0" y="4" width="12" height="1.8" fill="#d2d2d2"/><rect x="0" y="8" width="12" height="1.8" fill="#d2d2d2"/><path d="M9 10H17L13 14Z" fill="#d2d2d2"/></svg>
<div class="a" style="left:2px;top:364px;width:203px;height:164px;background:#383838;"></div>
<div class="a" style="left:19px;top:366px;width:186px;height:21px;background:#537591;"></div>
<svg style="left:3px;top:371px;" width="13" height="12" viewBox="0 0 13 12"><path d="M0.5 6C2 1.5 11 1.5 12.5 6C10 4.5 3 4.5 0.5 6Z" fill="#d2d2d2"/><circle cx="6.5" cy="4.6" r="2.6" fill="#f0f0f0"/><path d="M1.2 7.5C3.5 11 9.5 11 11.8 7.5" fill="none" stroke="#d2d2d2" stroke-width="1.4"/></svg>
<svg style="left:3px;top:393px;" width="13" height="12" viewBox="0 0 13 12"><path d="M0.5 6C2 1.5 11 1.5 12.5 6C10 4.5 3 4.5 0.5 6Z" fill="#d2d2d2"/><circle cx="6.5" cy="4.6" r="2.6" fill="#f0f0f0"/><path d="M1.2 7.5C3.5 11 9.5 11 11.8 7.5" fill="none" stroke="#d2d2d2" stroke-width="1.4"/></svg>
<svg style="left:22px;top:371px;" width="16" height="11" viewBox="0 0 16 11"><rect width="16" height="11" fill="#f0f0f0"/><rect x="2" y="2" width="3" height="3" fill="#d8d8d8"/><rect x="8" y="2" width="3" height="3" fill="#d8d8d8"/><rect x="5" y="6" width="3" height="3" fill="#d8d8d8"/><rect x="11" y="6" width="3" height="3" fill="#d8d8d8"/></svg>
<svg style="left:22px;top:393px;" width="16" height="11" viewBox="0 0 16 11"><defs><linearGradient id="bgth" x1="0" y1="0" x2="0" y2="1"><stop offset="0" stop-color="#e8fcfc"/><stop offset="0.45" stop-color="#c8f4f4"/><stop offset="0.6" stop-color="#b8ec40"/><stop offset="1" stop-color="#a8e020"/></linearGradient></defs><rect width="16" height="11" fill="url(#bgth)"/><rect x="0" y="0" width="2" height="11" fill="#f4fff0" opacity="0.7"/><rect x="12" y="3" width="1.2" height="6" fill="#507040"/></svg>
<svg style="left:44px;top:367px;" width="9" height="9" viewBox="0 0 9 9"><path d="M0.5 0.5H8.5V8.5H4" fill="none" stroke="#d2d2d2"/><path d="M0.5 3L5 7.5" stroke="#d2d2d2"/></svg>
<svg style="left:44px;top:389px;" width="9" height="9" viewBox="0 0 9 9"><path d="M0.5 0.5H8.5V8.5H4" fill="none" stroke="#d2d2d2"/><path d="M0.5 3L5 7.5" stroke="#d2d2d2"/></svg>
<div class="t" style="left:55px;top:370.97px;font-size:12.2px;color:#e6eef6;font-weight:bold">Paint Layer 1</div>
<div class="t" style="left:55px;top:391.72px;font-size:12.5px;color:#c8c8c8;">Background</div>
<svg style="left:161px;top:371px;" width="11" height="11" viewBox="0 0 11 11"><rect x="0" y="5" width="11" height="6" fill="#7f96aa"/><path d="M6 5V2.5A2.2 2.2 0 0 1 10 2.5" fill="none" stroke="#7f96aa" stroke-width="1.4"/></svg>
<svg style="left:176px;top:372px;" width="11" height="9" viewBox="0 0 11 9"><path d="M10.5 0.5C8 4 8 7 10.5 8.5M9 4C7 0 1 0 0.8 4.5S7 9 9 5" fill="none" stroke="#7f96aa" stroke-width="1.3"/></svg>
<svg style="left:190px;top:370px;" width="12" height="12" viewBox="0 0 12 12"><rect width="12" height="12" fill="#7f96aa"/><rect x="0" y="0" width="4" height="4" fill="#5f7a94"/><rect x="8" y="0" width="4" height="4" fill="#5f7a94"/><rect x="4" y="4" width="4" height="4" fill="#5f7a94"/><rect x="0" y="8" width="4" height="4" fill="#5f7a94"/><rect x="8" y="8" width="4" height="4" fill="#5f7a94"/></svg>
<svg style="left:161px;top:392px;" width="11" height="11" viewBox="0 0 11 11"><rect x="0" y="5" width="11" height="6" fill="#6a6a6a"/><path d="M6 5V2.5A2.2 2.2 0 0 1 10 2.5" fill="none" stroke="#6a6a6a" stroke-width="1.4"/></svg>
<svg style="left:176px;top:393px;" width="11" height="9" viewBox="0 0 11 9"><path d="M10.5 0.5C8 4 8 7 10.5 8.5M9 4C7 0 1 0 0.8 4.5S7 9 9 5" fill="none" stroke="#6a6a6a" stroke-width="1.3"/></svg>
<svg style="left:190px;top:391px;" width="12" height="12" viewBox="0 0 12 12"><rect width="12" height="12" fill="#6a6a6a"/><rect x="0" y="0" width="4" height="4" fill="#4e4e4e"/><rect x="8" y="0" width="4" height="4" fill="#4e4e4e"/><rect x="4" y="4" width="4" height="4" fill="#4e4e4e"/><rect x="0" y="8" width="4" height="4" fill="#4e4e4e"/><rect x="8" y="8" width="4" height="4" fill="#4e4e4e"/></svg>
<svg style="left:5px;top:533px;" width="15" height="15" viewBox="0 0 15 15"><path d="M7.5 0.5V14.5M0.5 7.5H14.5" stroke="#d2d2d2" stroke-width="1.8"/></svg>
<svg style="left:28px;top:537px;" width="9" height="5" viewBox="0 0 9 5"><path d="M0 0H9L4.5 5Z" fill="#9a9a9a"/></svg>
<svg style="left:45px;top:532px;" width="17" height="17" viewBox="0 0 17 17"><rect x="3.6" y="0.6" width="12.8" height="12.8" fill="none" stroke="#d2d2d2" stroke-width="1.2"/><path d="M0.6 4V16.4H12.5" fill="none" stroke="#d2d2d2" stroke-width="1.2"/></svg>
<svg style="left:70px;top:535px;" width="16" height="9" viewBox="0 0 16 9"><path d="M0.7 0.7L8 8L15.3 0.7" fill="none" stroke="#d2d2d2" stroke-width="1.6"/></svg>
<svg style="left:96px;top:535px;" width="16" height="9" viewBox="0 0 16 9"><path d="M0.7 8.3L8 1L15.3 8.3" fill="none" stroke="#d2d2d2" stroke-width="1.6"/></svg>
<svg style="left:121px;top:533px;" width="17" height="14" viewBox="0 0 17 14"><path d="M0 2H17M0 7H17M0 12H17" stroke="#d2d2d2" stroke-width="1.5"/><rect x="9" y="0" width="3" height="4" fill="#d2d2d2"/><rect x="4" y="5" width="3" height="4" fill="#d2d2d2"/><rect x="9" y="10" width="3" height="4" fill="#d2d2d2"/></svg>
<svg style="left:144px;top:537px;" width="9" height="5" viewBox="0 0 9 5"><path d="M0 0H9L4.5 5Z" fill="#9a9a9a"/></svg>
<svg style="left:186px;top:532px;" width="15" height="16" viewBox="0 0 15 16"><rect x="0" y="2.5" width="15" height="2" fill="#d2d2d2"/><rect x="5" y="0" width="5" height="2.5" fill="#d2d2d2"/><path d="M1.5 5.5H13.5L13 16H2Z" fill="#d2d2d2"/></svg>
<div class="a" style="left:206px;top:110px;width:8px;height:446px;background:#474747;"></div>
<div class="a" style="left:210px;top:320px;width:1px;height:1px;background:#8a8a8a;"></div>
<div class="a" style="left:210px;top:322px;width:1px;height:1px;background:#8a8a8a;"></div>
<div class="a" style="left:210px;top:324px;width:1px;height:1px;background:#8a8a8a;"></div>
<div class="a" style="left:210px;top:326px;width:1px;height:1px;background:#8a8a8a;"></div>
<div class="a" style="left:210px;top:328px;width:1px;height:1px;background:#8a8a8a;"></div>
<div class="a" style="left:210px;top:330px;width:1px;height:1px;background:#8a8a8a;"></div>
<div class="a" style="left:210px;top:332px;width:1px;height:1px;background:#8a8a8a;"></div>
<div class="a" style="left:210px;top:334px;width:1px;height:1px;background:#8a8a8a;"></div>
<div class="a" style="left:210px;top:336px;width:1px;height:1px;background:#8a8a8a;"></div>
<div class="a" style="left:210px;top:338px;width:1px;height:1px;background:#8a8a8a;"></div>
<div class="a" style="left:213px;top:103px;width:1323px;height:7px;background:#474747;"></div>
<div class="a" style="left:0px;top:104px;width:1536px;height:1px;background:#3e3e3e;"></div>
<div class="a" style="left:0px;top:105px;width:1536px;height:1px;background:#4e4e4e;"></div>
<div class="a" style="left:214px;top:111px;width:1321px;height:37px;background:#4a4a4a;border:1px solid #555;border-bottom:none"></div>
<div class="a" style="left:229.3px;top:119.9px;width:16px;height:16px;background:conic-gradient(from 0deg,#e030e8 0deg,#ff50c8 50deg,#ff90a8 95deg,#f0e070 135deg,#d0f0c0 175deg,#40e0e8 215deg,#60d0ff 250deg,#a8a8ff 290deg,#b040e0 330deg,#e030e8 360deg);border-radius:50%"></div>
<svg style="left:229.3px;top:119.9px;" width="16" height="16" viewBox="0 0 16 16"><line x1="0.4" y1="1.6" x2="8.0" y2="8.4" stroke="#301840" stroke-width="2.88" stroke-linecap="round" opacity="0.7"/><circle cx="10.8" cy="11.04" r="1.92" fill="#101010"/></svg>
<div class="t" style="left:574px;width:600px;text-align:center;top:123.15px;font-size:14px;color:#c0c0c0;">[Not Saved]&nbsp; *</div>
<svg style="left:1501px;top:122px;" width="16" height="16" viewBox="0 0 16 16"><path d="M1 1L15 15M15 1L1 15" stroke="#e0e0e0" stroke-width="2"/></svg>
<div class="a" style="left:214px;top:148px;width:1305px;height:388px;background:#808080;"></div>
<div class="a" style="left:511px;top:201px;width:560px;height:335px;background:#b8f2f3;"></div>
<div class="a" style="left:511px;top:508px;width:560px;height:28px;background:#bff21f;"></div>
<svg style="left:511px;top:201px;" width="560" height="335" viewBox="0 0 560 335"><path d="M65.3 51.6L73.1 45.8L89.0 42.5L101.0 40.5L124.0 39.5L142.0 40.2L161.0 42.5L179.0 47.5L177.6 65.7L189.2 67.7L192.0 73.2L196.7 71.9L202.2 78.7L205.6 92.4L205.0 107.4L196.7 114.2L187.2 111.5L186.5 121.0L142.0 121.8L139.3 104.7L128.4 108.0L122.9 97.8L121.5 106.0L89.0 109.5L48.6 108.5L37.8 105.6L36.4 101.6L40.8 81.0L41.7 71.3L42.7 68.3L61.4 65.4L65.8 60.5L61.4 59.5L64.3 56.5Z" fill="#ffffff"/>
<path d="M437.0 197.0L450.0 197.0L450.0 335.0L437.0 335.0Z" fill="#d98d58"/>
<path d="M449.0 269.7L474.0 247.0L482.0 254.0L449.0 289.0Z" fill="#d98d58"/>
<path d="M421.9 175.2L429.8 167.3L443.0 178.9L447.7 170.5L458.8 175.8L454.0 188.4L457.7 188.9L457.7 200.0L445.6 201.0L441.4 197.9L418.2 194.2L419.3 183.1L428.8 183.7Z" fill="#507800"/>
<path d="M470.4 230.5L481.8 228.6L483.7 234.9L499.7 226.6L505.7 236.2L498.4 241.3L508.0 243.8L506.7 255.3L491.4 252.8L492.7 257.9L485.0 266.8L473.6 255.9L476.7 245.8L471.6 244.5Z" fill="#507800"/></svg>
<div class="a" style="left:1519px;top:148px;width:17px;height:388px;background:#3c3c3c;"></div>
<div class="a" style="left:1519px;top:148px;width:17px;height:17px;background:#444444;border:1px solid #4e4e4e"></div>
<svg style="left:1523px;top:153px;" width="9" height="5" viewBox="0 0 9 5"><path d="M0 5L4.5 0L9 5Z" fill="#9a9a9a"/></svg>
<div class="a" style="left:1519px;top:519px;width:17px;height:17px;background:#444444;border:1px solid #4e4e4e"></div>
<svg style="left:1523px;top:525px;" width="9" height="5" viewBox="0 0 9 5"><path d="M0 0H9L4.5 5Z" fill="#9a9a9a"/></svg>
<div class="a" style="left:1520px;top:248px;width:15px;height:108px;background:#434343;border:1px solid #4e4e4e"></div>
<div class="a" style="left:214px;top:536px;width:1305px;height:17px;background:#3e3e3e;"></div>
<div class="a" style="left:214px;top:536px;width:17px;height:17px;background:#444444;border:1px solid #4e4e4e"></div>
<svg style="left:219px;top:540px;" width="5" height="9" viewBox="0 0 5 9"><path d="M5 0V9L0 4.5Z" fill="#9a9a9a"/></svg>
<div class="a" style="left:1502px;top:536px;width:17px;height:17px;background:#444444;border:1px solid #4e4e4e"></div>
<svg style="left:1508px;top:540px;" width="5" height="9" viewBox="0 0 5 9"><path d="M0 0V9L5 4.5Z" fill="#9a9a9a"/></svg>
<div class="a" style="left:614px;top:537px;width:571px;height:15px;background:#434343;border:1px solid #4e4e4e"></div>
<div class="a" style="left:1519px;top:536px;width:17px;height:17px;background:#474747;"></div>
<div class="a" style="left:762px;top:556px;width:1px;height:1px;background:#8a8a8a;"></div>
<div class="a" style="left:764px;top:556px;width:1px;height:1px;background:#8a8a8a;"></div>
<div class="a" style="left:766px;top:556px;width:1px;height:1px;background:#8a8a8a;"></div>
<div class="a" style="left:768px;top:556px;width:1px;height:1px;background:#8a8a8a;"></div>
<div class="a" style="left:770px;top:556px;width:1px;height:1px;background:#8a8a8a;"></div>
<div class="a" style="left:772px;top:556px;width:1px;height:1px;background:#8a8a8a;"></div>
<div class="a" style="left:774px;top:556px;width:1px;height:1px;background:#8a8a8a;"></div>
<div class="a" style="left:776px;top:556px;width:1px;height:1px;background:#8a8a8a;"></div>
<div class="a" style="left:0px;top:553px;width:1536px;height:8px;background:#474747;"></div>
<div class="a" style="left:1px;top:561px;width:136px;height:31px;background:#4a4a4a;border:1px solid #575757;border-bottom:none;border-radius:2px 2px 0 0"></div>
<div class="a" style="left:139px;top:563px;width:125px;height:27px;background:#444444;border:1px solid #535353;border-radius:2px 2px 0 0"></div>
<div class="t" style="left:15px;top:570.42px;font-size:12.5px;color:#c0c0c0;">Animation Timeline</div>
<div class="t" style="left:151px;top:570.92px;font-size:12.5px;color:#c0c0c0;">Animation Curves</div>
<div class="a" style="left:137px;top:590px;width:1121px;height:1px;background:#3c3c3c;"></div>
<div class="t" style="left:11px;top:599.02px;font-size:12.5px;color:#c0c0c0;">Animation Timeline</div>
<svg style="left:150px;top:597px;" width="13" height="13" viewBox="0 0 13 13"><rect x="0" y="0" width="2" height="13" fill="#d2d2d2"/><path d="M9 0V13L2.5 6.5Z" fill="#d2d2d2"/><rect x="10" y="0" width="2" height="13" fill="#d2d2d2"/></svg>
<svg style="left:176px;top:597px;" width="10" height="13" viewBox="0 0 10 13"><path d="M7 0V13L0.5 6.5Z" fill="#d2d2d2"/><rect x="8" y="0" width="2" height="13" fill="#d2d2d2"/></svg>
<div class="a" style="left:199px;top:598px;width:11px;height:11px;background:#d2d2d2;"></div>
<svg style="left:224px;top:597px;" width="8" height="13" viewBox="0 0 8 13"><path d="M0 0V13L7.5 6.5Z" fill="#d2d2d2"/></svg>
<svg style="left:248px;top:597px;" width="10" height="13" viewBox="0 0 10 13"><rect x="0" y="0" width="2" height="13" fill="#d2d2d2"/><path d="M3 0V13L9.5 6.5Z" fill="#d2d2d2"/></svg>
<svg style="left:270px;top:597px;" width="12" height="13" viewBox="0 0 12 13"><rect x="0" y="0" width="2" height="13" fill="#d2d2d2"/><path d="M3 0V13L9.5 6.5Z" fill="#d2d2d2"/><rect x="10" y="0" width="2" height="13" fill="#d2d2d2"/></svg>
<div class="a" style="left:301px;top:592px;width:52px;height:25px;background:#3a3a3a;"></div>
<div class="t" style="left:302px;top:599.34px;font-size:12px;color:#c0c0c0;">#</div>
<div class="t" style="left:317px;top:599.42px;font-size:12.5px;color:#c8c8c8;">0</div>
<div class="a" style="left:354px;top:593px;width:15px;height:23px;background:#474747;border:1px solid #404040"></div>
<svg style="left:357px;top:597px;" width="9" height="16" viewBox="0 0 9 16"><path d="M0 5L4.5 0.5L9 5Z" fill="#7a7a7a"/><path d="M0 10H9L4.5 14.5Z" fill="#7a7a7a"/></svg>
<div class="a" style="left:384px;top:592px;width:24px;height:25px;background:#3a3a3a;"></div>
<svg style="left:387px;top:596px;" width="17" height="14" viewBox="0 0 17 14"><path d="M3.5 2.5V0.5H16.5V11.5H14" fill="none" stroke="#d2d2d2"/><rect x="0.5" y="2.5" width="13" height="10" fill="none" stroke="#d2d2d2"/><path d="M5 5V10L9.5 7.5Z" fill="#d2d2d2"/></svg>
<div class="a" style="left:408px;top:592px;width:85px;height:25px;background:#3a3a3a;"></div>
<div class="a" style="left:408px;top:593px;width:37px;height:22px;background:#537591;"></div>
<div class="t" style="left:412px;top:599.84px;font-size:12px;color:#d8e4ee;">Speed: 100 %</div>
<div class="a" style="left:494px;top:593px;width:15px;height:23px;background:#474747;border:1px solid #404040"></div>
<svg style="left:497px;top:597px;" width="9" height="16" viewBox="0 0 9 16"><path d="M0 5L4.5 0.5L9 5Z" fill="#7a7a7a"/><path d="M0 10H9L4.5 14.5Z" fill="#7a7a7a"/></svg>
<svg style="left:527px;top:597px;" width="15" height="12" viewBox="0 0 15 12"><rect x="0.7" y="0.7" width="13.6" height="10.6" fill="none" stroke="#d2d2d2" stroke-width="1.4"/></svg>
<svg style="left:550px;top:596px;" width="17" height="13" viewBox="0 0 17 13"><rect x="0.7" y="4.7" width="12" height="7.6" fill="none" stroke="#d2d2d2" stroke-width="1.4"/><path d="M3.5 4.5V2.7H15.3V9.3H13" fill="none" stroke="#d2d2d2" stroke-width="1.4"/></svg>
<svg style="left:575px;top:596px;" width="15" height="13" viewBox="0 0 15 13"><rect x="0.7" y="1.7" width="13.6" height="10.6" fill="none" stroke="#d2d2d2" stroke-width="1.4"/><path d="M2 13L13 0" stroke="#d2d2d2" stroke-width="1.4"/></svg>
<svg style="left:1116px;top:596px;" width="17" height="17" viewBox="0 0 17 17"><path d="M9.5 0C5.5 3 0.5 7 0.5 11C0.5 14.5 4 16.5 8.5 16.5C13 16.5 16.5 14.5 16.5 11C16.5 7 13.5 3 9.5 0Z" fill="#d2d2d2"/><path d="M9.5 1C6.5 5 5 11 7.5 16.5M9.5 1C8.5 6 9.5 12 12.5 16M9.5 1C4 5 2.5 10 3.5 15" stroke="#474747" stroke-width="1.1" fill="none"/></svg>
<svg style="left:1141px;top:597px;" width="18" height="16" viewBox="0 0 18 16"><rect x="0" y="0" width="15" height="2.2" fill="#d2d2d2"/><rect x="0" y="5" width="15" height="2.2" fill="#d2d2d2"/><rect x="0" y="10" width="15" height="2.2" fill="#d2d2d2"/><path d="M10 12.5H17L13.5 15.5Z" fill="#9a9a9a"/></svg>
<svg style="left:1192px;top:596px;" width="18" height="18" viewBox="0 0 18 18"><rect x="0.7" y="7.7" width="9.6" height="9.6" fill="none" stroke="#d2d2d2" stroke-width="1.4"/><path d="M7.7 7.5V0.7H17.3V10.3H10.5" fill="none" stroke="#d2d2d2" stroke-width="1.4"/></svg>
<svg style="left:1225px;top:597px;" width="14" height="14" viewBox="0 0 14 14"><path d="M1 1L13 13M13 1L1 13" stroke="#d2d2d2" stroke-width="1.5"/></svg>
<div class="a" style="left:0px;top:618px;width:179px;height:24px;background:#3f3f3f;"></div>
<svg style="left:7px;top:623px;" width="15" height="14" viewBox="0 0 15 14"><path d="M7 0V13M0 6.5H13" stroke="#d2d2d2" stroke-width="1.6"/><path d="M8 10H15L11.5 13.5Z" fill="#9a9a9a"/></svg>
<svg style="left:32px;top:623px;" width="16" height="14" viewBox="0 0 16 14"><path d="M1 4H4L8 0V13L4 9H1Z" fill="#d2d2d2"/><path d="M9 10H16L12.5 13.5Z" fill="#9a9a9a"/></svg>
<svg style="left:158px;top:623px;" width="14" height="13" viewBox="0 0 14 13"><path d="M3 0.7H0.7V12.3H3M11 0.7H13.3V12.3H11" fill="none" stroke="#d2d2d2" stroke-width="1.3"/><path d="M2.5 6.5H11.5" stroke="#d2d2d2" stroke-width="1.8"/><path d="M2 6.5L5.5 3V10ZM12 6.5L8.5 3V10Z" fill="#d2d2d2"/></svg>
<div class="a" style="left:179px;top:618px;width:1079px;height:24px;background:#3a3a3a;"></div>
<div class="t" style="left:181.0px;top:620.84px;font-size:12px;color:#c8c8c8;">0</div>
<div class="t" style="left:224.2px;top:620.84px;font-size:12px;color:#c8c8c8;">3</div>
<div class="t" style="left:267.4px;top:620.84px;font-size:12px;color:#c8c8c8;">6</div>
<div class="t" style="left:310.6px;top:620.84px;font-size:12px;color:#c8c8c8;">9</div>
<div class="t" style="left:353.8px;top:620.84px;font-size:12px;color:#c8c8c8;">12</div>
<div class="t" style="left:397.0px;top:620.84px;font-size:12px;color:#c8c8c8;">15</div>
<div class="t" style="left:440.2px;top:620.84px;font-size:12px;color:#c8c8c8;">18</div>
<div class="t" style="left:483.4px;top:620.84px;font-size:12px;color:#c8c8c8;">21</div>
<div class="t" style="left:526.6px;top:620.84px;font-size:12px;color:#c8c8c8;">24</div>
<div class="t" style="left:569.8px;top:620.84px;font-size:12px;color:#c8c8c8;">27</div>
<div class="t" style="left:613.0px;top:620.84px;font-size:12px;color:#c8c8c8;">30</div>
<div class="t" style="left:656.2px;top:620.84px;font-size:12px;color:#c8c8c8;">33</div>
<div class="t" style="left:699.4px;top:620.84px;font-size:12px;color:#c8c8c8;">36</div>
<div class="t" style="left:742.6px;top:620.84px;font-size:12px;color:#c8c8c8;">39</div>
<div class="t" style="left:785.8px;top:620.84px;font-size:12px;color:#c8c8c8;">42</div>
<div class="t" style="left:829.0px;top:620.84px;font-size:12px;color:#c8c8c8;">45</div>
<div class="t" style="left:872.2px;top:620.84px;font-size:12px;color:#c8c8c8;">48</div>
<div class="t" style="left:915.4px;top:620.84px;font-size:12px;color:#c8c8c8;">51</div>
<div class="t" style="left:958.6px;top:620.84px;font-size:12px;color:#c8c8c8;">54</div>
<div class="t" style="left:1001.8px;top:620.84px;font-size:12px;color:#c8c8c8;">57</div>
<div class="t" style="left:1045.0px;top:620.84px;font-size:12px;color:#c8c8c8;">60</div>
<div class="t" style="left:1088.2px;top:620.84px;font-size:12px;color:#c8c8c8;">63</div>
<div class="t" style="left:1131.4px;top:620.84px;font-size:12px;color:#c8c8c8;">66</div>
<div class="t" style="left:1174.6px;top:620.84px;font-size:12px;color:#c8c8c8;">69</div>
<div class="t" style="left:1217.8px;top:620.84px;font-size:12px;color:#c8c8c8;">72</div>
<div class="a" style="left:0px;top:642px;width:179px;height:25px;background:#3a3a3a;"></div>
<div class="a" style="left:0px;top:642px;width:179px;height:1px;background:#58708a;"></div>
<div class="a" style="left:0px;top:665px;width:179px;height:2px;background:#58708a;"></div>
<div class="a" style="left:0px;top:667px;width:179px;height:25px;background:#393939;"></div>
<div class="a" style="left:0px;top:692px;width:179px;height:73px;background:#474747;"></div>
<div class="a" style="left:179px;top:642px;width:1079px;height:25px;background:#3c4552;"></div>
<svg style="left:179px;top:642px;" width="1079" height="25" viewBox="0 0 1079 25"><rect x="0.0" y="0" width="1" height="25" fill="#404a57"/><rect x="14.4" y="0" width="1" height="25" fill="#404a57"/><rect x="28.8" y="0" width="1" height="25" fill="#404a57"/><rect x="43.2" y="0" width="1" height="25" fill="#404a57"/><rect x="57.6" y="0" width="1" height="25" fill="#404a57"/><rect x="72.0" y="0" width="1" height="25" fill="#404a57"/><rect x="86.4" y="0" width="1" height="25" fill="#404a57"/><rect x="100.8" y="0" width="1" height="25" fill="#404a57"/><rect x="115.2" y="0" width="1" height="25" fill="#404a57"/><rect x="129.6" y="0" width="1" height="25" fill="#404a57"/><rect x="144.0" y="0" width="1" height="25" fill="#404a57"/><rect x="158.4" y="0" width="1" height="25" fill="#404a57"/><rect x="172.8" y="0" width="1" height="25" fill="#404a57"/><rect x="187.2" y="0" width="1" height="25" fill="#404a57"/><rect x="201.6" y="0" width="1" height="25" fill="#404a57"/><rect x="216.0" y="0" width="1" height="25" fill="#404a57"/><rect x="230.4" y="0" width="1" height="25" fill="#404a57"/><rect x="244.8" y="0" width="1" height="25" fill="#404a57"/><rect x="259.2" y="0" width="1" height="25" fill="#404a57"/><rect x="273.6" y="0" width="1" height="25" fill="#404a57"/><rect x="288.0" y="0" width="1" height="25" fill="#404a57"/><rect x="302.4" y="0" width="1" height="25" fill="#404a57"/><rect x="316.8" y="0" width="1" height="25" fill="#404a57"/><rect x="331.2" y="0" width="1" height="25" fill="#404a57"/><rect x="345.6" y="0" width="1" height="25" fill="#404a57"/><rect x="360.0" y="0" width="1" height="25" fill="#404a57"/><rect x="374.4" y="0" width="1" height="25" fill="#404a57"/><rect x="388.8" y="0" width="1" height="25" fill="#404a57"/><rect x="403.2" y="0" width="1" height="25" fill="#404a57"/><rect x="417.6" y="0" width="1" height="25" fill="#404a57"/><rect x="432.0" y="0" width="1" height="25" fill="#404a57"/><rect x="446.4" y="0" width="1" height="25" fill="#404a57"/><rect x="460.8" y="0" width="1" height="25" fill="#404a57"/><rect x="475.2" y="0" width="1" height="25" fill="#404a57"/><rect x="489.6" y="0" width="1" height="25" fill="#404a57"/><rect x="504.0" y="0" width="1" height="25" fill="#404a57"/><rect x="518.4" y="0" width="1" height="25" fill="#404a57"/><rect x="532.8" y="0" width="1" height="25" fill="#404a57"/><rect x="547.2" y="0" width="1" height="25" fill="#404a57"/><rect x="561.6" y="0" width="1" height="25" fill="#404a57"/><rect x="576.0" y="0" width="1" height="25" fill="#404a57"/><rect x="590.4" y="0" width="1" height="25" fill="#404a57"/><rect x="604.8" y="0" width="1" height="25" fill="#404a57"/><rect x="619.2" y="0" width="1" height="25" fill="#404a57"/><rect x="633.6" y="0" width="1" height="25" fill="#404a57"/><rect x="648.0" y="0" width="1" height="25" fill="#404a57"/><rect x="662.4" y="0" width="1" height="25" fill="#404a57"/><rect x="676.8" y="0" width="1" height="25" fill="#404a57"/><rect x="691.2" y="0" width="1" height="25" fill="#404a57"/><rect x="705.6" y="0" width="1" height="25" fill="#404a57"/><rect x="720.0" y="0" width="1" height="25" fill="#404a57"/><rect x="734.4" y="0" width="1" height="25" fill="#404a57"/><rect x="748.8" y="0" width="1" height="25" fill="#404a57"/><rect x="763.2" y="0" width="1" height="25" fill="#404a57"/><rect x="777.6" y="0" width="1" height="25" fill="#404a57"/><rect x="792.0" y="0" width="1" height="25" fill="#404a57"/><rect x="806.4" y="0" width="1" height="25" fill="#404a57"/><rect x="820.8" y="0" width="1" height="25" fill="#404a57"/><rect x="835.2" y="0" width="1" height="25" fill="#404a57"/><rect x="849.6" y="0" width="1" height="25" fill="#404a57"/><rect x="864.0" y="0" width="1" height="25" fill="#404a57"/><rect x="878.4" y="0" width="1" height="25" fill="#404a57"/><rect x="892.8" y="0" width="1" height="25" fill="#404a57"/><rect x="907.2" y="0" width="1" height="25" fill="#404a57"/><rect x="921.6" y="0" width="1" height="25" fill="#404a57"/><rect x="936.0" y="0" width="1" height="25" fill="#404a57"/><rect x="950.4" y="0" width="1" height="25" fill="#404a57"/><rect x="964.8" y="0" width="1" height="25" fill="#404a57"/><rect x="979.2" y="0" width="1" height="25" fill="#404a57"/><rect x="993.6" y="0" width="1" height="25" fill="#404a57"/><rect x="1008.0" y="0" width="1" height="25" fill="#404a57"/><rect x="1022.4" y="0" width="1" height="25" fill="#404a57"/><rect x="1036.8" y="0" width="1" height="25" fill="#404a57"/><rect x="1051.2" y="0" width="1" height="25" fill="#404a57"/><rect x="1065.6" y="0" width="1" height="25" fill="#404a57"/></svg>
<div class="a" style="left:179px;top:667px;width:1079px;height:25px;background:#3d3d3d;"></div>
<div class="a" style="left:179px;top:692px;width:1079px;height:73px;background:#393939;"></div>
<div class="a" style="left:179px;top:635px;width:14px;height:7px;background:#f0a22a;"></div>
<div class="a" style="left:179px;top:642px;width:14px;height:25px;background:#a07838;"></div>
<div class="a" style="left:183px;top:653px;width:3px;height:3px;background:#f0b040;"></div>
<div class="a" style="left:179px;top:667px;width:2px;height:24px;background:#f0a22a;"></div>
<div class="a" style="left:191px;top:667px;width:2px;height:24px;background:#f0a22a;"></div>
<svg style="left:4px;top:647px;" width="14" height="14" viewBox="0 0 14 14"><path d="M8 0.5L13.5 6L11.5 7L8 10.5L8 12.5L1.5 6L3.5 6L7 2.5Z" fill="#d2d2d2"/><path d="M0.5 13.5L4.5 9.5" stroke="#d2d2d2" stroke-width="1.4"/></svg>
<svg style="left:4px;top:672px;" width="14" height="14" viewBox="0 0 14 14"><path d="M8 0.5L13.5 6L11.5 7L8 10.5L8 12.5L1.5 6L3.5 6L7 2.5Z" fill="#d2d2d2"/><path d="M0.5 13.5L4.5 9.5" stroke="#d2d2d2" stroke-width="1.4"/></svg>
<div class="t" style="left:22px;top:649.22px;font-size:12.5px;color:#c8c8c8;">Paint Layer 1</div>
<div class="t" style="left:22px;top:673.62px;font-size:12.5px;color:#c8c8c8;">Background</div>
<svg style="left:121px;top:649px;" width="13" height="12" viewBox="0 0 13 12"><path d="M0.5 6C2 1.5 11 1.5 12.5 6C10 4.5 3 4.5 0.5 6Z" fill="#d2d2d2"/><circle cx="6.5" cy="4.6" r="2.6" fill="#f0f0f0"/><path d="M1.2 7.5C3.5 11 9.5 11 11.8 7.5" fill="none" stroke="#d2d2d2" stroke-width="1.4"/></svg>
<svg style="left:138px;top:649px;" width="11" height="11" viewBox="0 0 11 11"><rect x="0" y="5" width="11" height="6" fill="#6a6a6a"/><path d="M6 5V2.5A2.2 2.2 0 0 1 10 2.5" fill="none" stroke="#6a6a6a" stroke-width="1.4"/></svg>
<svg style="left:152px;top:650px;" width="11" height="9" viewBox="0 0 11 9"><path d="M10.5 0.5C8 4 8 7 10.5 8.5M9 4C7 0 1 0 0.8 4.5S7 9 9 5" fill="none" stroke="#6a6a6a" stroke-width="1.3"/></svg>
<svg style="left:165px;top:649px;" width="12" height="12" viewBox="0 0 12 12"><rect width="12" height="12" fill="#6a6a6a"/><rect x="0" y="0" width="4" height="4" fill="#505050"/><rect x="8" y="0" width="4" height="4" fill="#505050"/><rect x="4" y="4" width="4" height="4" fill="#505050"/><rect x="0" y="8" width="4" height="4" fill="#505050"/><rect x="8" y="8" width="4" height="4" fill="#505050"/></svg>
<svg style="left:121px;top:674px;" width="13" height="12" viewBox="0 0 13 12"><path d="M0.5 6C2 1.5 11 1.5 12.5 6C10 4.5 3 4.5 0.5 6Z" fill="#d2d2d2"/><circle cx="6.5" cy="4.6" r="2.6" fill="#f0f0f0"/><path d="M1.2 7.5C3.5 11 9.5 11 11.8 7.5" fill="none" stroke="#d2d2d2" stroke-width="1.4"/></svg>
<svg style="left:138px;top:674px;" width="11" height="11" viewBox="0 0 11 11"><rect x="0" y="5" width="11" height="6" fill="#6a6a6a"/><path d="M6 5V2.5A2.2 2.2 0 0 1 10 2.5" fill="none" stroke="#6a6a6a" stroke-width="1.4"/></svg>
<svg style="left:152px;top:675px;" width="11" height="9" viewBox="0 0 11 9"><path d="M10.5 0.5C8 4 8 7 10.5 8.5M9 4C7 0 1 0 0.8 4.5S7 9 9 5" fill="none" stroke="#6a6a6a" stroke-width="1.3"/></svg>
<svg style="left:165px;top:674px;" width="12" height="12" viewBox="0 0 12 12"><rect width="12" height="12" fill="#6a6a6a"/><rect x="0" y="0" width="4" height="4" fill="#505050"/><rect x="8" y="0" width="4" height="4" fill="#505050"/><rect x="4" y="4" width="4" height="4" fill="#505050"/><rect x="0" y="8" width="4" height="4" fill="#505050"/><rect x="8" y="8" width="4" height="4" fill="#505050"/></svg>
<div class="a" style="left:0px;top:765px;width:1258px;height:18px;background:#3e3e3e;"></div>
<div class="a" style="left:1px;top:766px;width:16px;height:16px;background:#444444;border:1px solid #4e4e4e"></div>
<svg style="left:6px;top:770px;" width="5" height="9" viewBox="0 0 5 9"><path d="M5 0V9L0 4.5Z" fill="#9a9a9a"/></svg>
<div class="a" style="left:1242px;top:766px;width:16px;height:16px;background:#444444;border:1px solid #4e4e4e"></div>
<svg style="left:1248px;top:770px;" width="5" height="9" viewBox="0 0 5 9"><path d="M0 0V9L5 4.5Z" fill="#9a9a9a"/></svg>
<div class="a" style="left:18px;top:766px;width:905px;height:16px;background:#434343;border:1px solid #4e4e4e"></div>
<div class="a" style="left:1263px;top:666px;width:1px;height:1px;background:#8a8a8a;"></div>
<div class="a" style="left:1263px;top:668px;width:1px;height:1px;background:#8a8a8a;"></div>
<div class="a" style="left:1263px;top:670px;width:1px;height:1px;background:#8a8a8a;"></div>
<div class="a" style="left:1263px;top:672px;width:1px;height:1px;background:#8a8a8a;"></div>
<div class="a" style="left:1263px;top:674px;width:1px;height:1px;background:#8a8a8a;"></div>
<div class="a" style="left:1263px;top:676px;width:1px;height:1px;background:#8a8a8a;"></div>
<div class="a" style="left:1263px;top:678px;width:1px;height:1px;background:#8a8a8a;"></div>
<div class="a" style="left:1263px;top:680px;width:1px;height:1px;background:#8a8a8a;"></div>
<div class="a" style="left:1265px;top:553px;width:271px;height:231px;background:#474747;"></div>
<svg style="left:1267px;top:561px;" width="14" height="14" viewBox="0 0 14 14"><circle cx="7" cy="7" r="6.2" fill="none" stroke="#d2d2d2" stroke-width="1.2"/><rect x="4" y="7" width="6" height="3.2" fill="#d2d2d2"/><path d="M5.2 7V5.2A1.8 1.8 0 0 1 8.8 5.2" fill="none" stroke="#d2d2d2" stroke-width="1.1"/></svg>
<div class="t" style="left:1285px;top:563.62px;font-size:12.5px;color:#c0c0c0;">Onion Skins</div>
<svg style="left:1505px;top:561px;" width="13" height="12" viewBox="0 0 13 12"><rect x="0.5" y="4.5" width="7" height="7" fill="none" stroke="#d2d2d2"/><path d="M3.5 4.5V0.5H11.5V7.5H7.5" fill="none" stroke="#d2d2d2"/></svg>
<svg style="left:1523px;top:562px;" width="10" height="10" viewBox="0 0 10 10"><path d="M0.5 0.5L9.5 9.5M9.5 0.5L0.5 9.5" stroke="#d2d2d2" stroke-width="1.3"/></svg>
<div class="a" style="left:1275px;top:586px;width:252px;height:55px;background:#3a3a3a;"></div>
<div class="a" style="left:1276px;top:638px;width:7px;height:2px;background:#8a8a8a;"></div>
<div class="a" style="left:1289px;top:636px;width:7px;height:4px;background:#8a8a8a;"></div>
<div class="a" style="left:1300px;top:635px;width:7px;height:4px;background:#8a8a8a;"></div>
<div class="a" style="left:1312px;top:632px;width:7px;height:7px;background:#8a8a8a;"></div>
<div class="a" style="left:1323px;top:630px;width:7px;height:10px;background:#8a8a8a;"></div>
<div class="a" style="left:1334px;top:631px;width:7px;height:8px;background:#8a8a8a;"></div>
<div class="a" style="left:1346px;top:626px;width:7px;height:13px;background:#8a8a8a;"></div>
<div class="a" style="left:1358px;top:624px;width:7px;height:16px;background:#8a8a8a;"></div>
<div class="a" style="left:1369px;top:588px;width:7px;height:20px;background:#4a6a8c;"></div>
<div class="a" style="left:1369px;top:623px;width:7px;height:16px;background:#5b82a8;"></div>
<div class="a" style="left:1380px;top:588px;width:7px;height:20px;background:#4a6a8c;"></div>
<div class="a" style="left:1380px;top:620px;width:7px;height:20px;background:#5b82a8;"></div>
<div class="a" style="left:1392px;top:588px;width:17px;height:20px;background:#4a6a8c;"></div>
<div class="a" style="left:1392px;top:622px;width:17px;height:18px;background:#5b82a8;"></div>
<div class="a" style="left:1415px;top:588px;width:7px;height:20px;background:#4a6a8c;"></div>
<div class="a" style="left:1415px;top:622px;width:7px;height:18px;background:#5b82a8;"></div>
<div class="a" style="left:1426px;top:588px;width:7px;height:20px;background:#4a6a8c;"></div>
<div class="a" style="left:1426px;top:623px;width:7px;height:16px;background:#5b82a8;"></div>
<div class="a" style="left:1438px;top:624px;width:7px;height:16px;background:#8a8a8a;"></div>
<div class="a" style="left:1450px;top:626px;width:7px;height:13px;background:#8a8a8a;"></div>
<div class="a" style="left:1460px;top:629px;width:7px;height:10px;background:#8a8a8a;"></div>
<div class="a" style="left:1472px;top:630px;width:7px;height:10px;background:#8a8a8a;"></div>
<div class="a" style="left:1484px;top:632px;width:7px;height:7px;background:#8a8a8a;"></div>
<div class="a" style="left:1494px;top:634px;width:7px;height:6px;background:#8a8a8a;"></div>
<div class="a" style="left:1506px;top:636px;width:7px;height:4px;background:#8a8a8a;"></div>
<div class="a" style="left:1519px;top:637px;width:7px;height:2px;background:#8a8a8a;"></div>
<div class="t" style="left:980px;width:600px;text-align:center;top:594.34px;font-size:12px;color:#d0d0d0;">10</div>
<div class="t" style="left:992.5px;width:600px;text-align:center;top:594.34px;font-size:12px;color:#d0d0d0;">-9</div>
<div class="t" style="left:1003.5px;width:600px;text-align:center;top:594.34px;font-size:12px;color:#d0d0d0;">-8</div>
<div class="t" style="left:1015px;width:600px;text-align:center;top:594.34px;font-size:12px;color:#d0d0d0;">-7</div>
<div class="t" style="left:1026.5px;width:600px;text-align:center;top:594.34px;font-size:12px;color:#d0d0d0;">-6</div>
<div class="t" style="left:1038px;width:600px;text-align:center;top:594.34px;font-size:12px;color:#d0d0d0;">-5</div>
<div class="t" style="left:1049.5px;width:600px;text-align:center;top:594.34px;font-size:12px;color:#d0d0d0;">-4</div>
<div class="t" style="left:1061px;width:600px;text-align:center;top:594.34px;font-size:12px;color:#d0d0d0;">-3</div>
<div class="t" style="left:1072.5px;width:600px;text-align:center;top:594.34px;font-size:12px;color:#d0d0d0;">-2</div>
<div class="t" style="left:1084px;width:600px;text-align:center;top:594.34px;font-size:12px;color:#d0d0d0;">-1</div>
<div class="t" style="left:1100.5px;width:600px;text-align:center;top:594.34px;font-size:12px;color:#d0d0d0;">0</div>
<div class="t" style="left:1118.5px;width:600px;text-align:center;top:594.34px;font-size:12px;color:#d0d0d0;">1</div>
<div class="t" style="left:1130px;width:600px;text-align:center;top:594.34px;font-size:12px;color:#d0d0d0;">2</div>
<div class="t" style="left:1141px;width:600px;text-align:center;top:594.34px;font-size:12px;color:#d0d0d0;">3</div>
<div class="t" style="left:1153px;width:600px;text-align:center;top:594.34px;font-size:12px;color:#d0d0d0;">4</div>
<div class="t" style="left:1164px;width:600px;text-align:center;top:594.34px;font-size:12px;color:#d0d0d0;">5</div>
<div class="t" style="left:1176px;width:600px;text-align:center;top:594.34px;font-size:12px;color:#d0d0d0;">6</div>
<div class="t" style="left:1187px;width:600px;text-align:center;top:594.34px;font-size:12px;color:#d0d0d0;">7</div>
<div class="t" style="left:1198px;width:600px;text-align:center;top:594.34px;font-size:12px;color:#d0d0d0;">8</div>
<div class="t" style="left:1210px;width:600px;text-align:center;top:594.34px;font-size:12px;color:#d0d0d0;">9</div>
<div class="t" style="left:1222.5px;width:600px;text-align:center;top:594.34px;font-size:12px;color:#d0d0d0;">10</div>
<div class="a" style="left:1275px;top:651px;width:16px;height:16px;background:#383838;"></div>
<div class="t" style="left:1295px;top:653.42px;font-size:12.5px;color:#c8c8c8;">Filter Onion Skins by Frame Color</div>
<div class="a" style="left:1278px;top:670px;width:248px;height:12.5px;background:#474747;border:1px solid #4d4d4d;border-top:none"></div>
<div class="a" style="left:1273px;top:704px;width:223px;height:1px;background:#3a3a3a;"></div>
<div class="a" style="left:1503px;top:692px;width:24px;height:24px;background:#454545;border:1px solid #3e3e3e;border-radius:2px"></div>
<svg style="left:1506px;top:700px;" width="18" height="11" viewBox="0 0 18 11"><path d="M1 1L9 9.5L17 1" fill="none" stroke="#e0e0e0" stroke-width="2"/></svg>
<div class="a" style="left:1275px;top:723px;width:235px;height:24px;background:#383838;"></div>
<div class="a" style="left:1275px;top:723px;width:73px;height:24px;background:#537591;"></div>
<div class="t" style="left:1092px;width:600px;text-align:center;top:730.42px;font-size:12.5px;color:#d8d8d8;">Tint: 31.00%</div>
<div class="a" style="left:1511px;top:723px;width:15px;height:24px;background:#474747;border:1px solid #404040"></div>
<svg style="left:1514px;top:727px;" width="9" height="16" viewBox="0 0 9 16"><path d="M0 5L4.5 0.5L9 5Z" fill="#9a9a9a"/><path d="M0 10H9L4.5 14.5Z" fill="#9a9a9a"/></svg>
<div class="a" style="left:1275px;top:752px;width:38px;height:23px;background:#3e3e3e;border:1px solid #444"></div>
<div class="a" style="left:1279px;top:757px;width:33px;height:14px;background:#ff0000;"></div>
<div class="t" style="left:1320px;top:759.22px;font-size:12.5px;color:#c8c8c8;">Previous frames</div>
<div class="t" style="left:1414px;top:759.22px;font-size:12.5px;color:#c8c8c8;">Next frames</div>
<div class="a" style="left:1488px;top:752px;width:39px;height:23px;background:#3e3e3e;border:1px solid #444"></div>
<div class="a" style="left:1491px;top:757px;width:33px;height:14px;background:#00ee00;"></div>
<div class="a" style="left:0px;top:783px;width:1536px;height:33px;background:#474747;"></div>
<svg style="left:5px;top:792px;" width="14" height="14" viewBox="0 0 14 14"><rect x="0.5" y="0.5" width="13" height="13" fill="none" stroke="#b0b0b0"/><circle cx="7" cy="7" r="3.5" fill="none" stroke="#909090"/></svg>
<div class="t" style="left:29px;top:794.15px;font-size:14px;color:#c8c8c8;">e) Marker Plain (mypaint)</div>
<div class="t" style="left:367px;top:794.15px;font-size:14px;color:#c8c8c8;">RGB/Alpha (8-bit integer/channel)&nbsp; sRGB-elle-V2-srgbtrc.icc</div>
<div class="a" style="left:1098px;top:785px;width:131px;height:31px;background:#444444;border:1px solid #4c4c4c"></div>
<div class="t" style="left:1102px;top:795.15px;font-size:14px;color:#c8c8c8;">700 <u>x</u> 700 (8.0 MiB)</div>
<svg style="left:1235px;top:792px;" width="18" height="18" viewBox="0 0 18 18"><circle cx="9" cy="9" r="8.5" fill="#2e2e2e"/><path d="M6 9H17M13 6L16 9L13 12" stroke="#d0d0d0" stroke-width="1.2" fill="none"/></svg>
<div class="t" style="left:1259px;top:794.15px;font-size:14px;color:#c8c8c8;">0.00°</div>
<div class="t" style="left:1383px;top:794.15px;font-size:14px;color:#c8c8c8;">100.0%</div>
<div class="a" style="left:1444px;top:797px;width:64px;height:6px;background:#383838;"></div>
<div class="a" style="left:1444px;top:797px;width:14px;height:6px;background:#7a9ab8;"></div>
<div class="a" style="left:1458px;top:793px;width:14px;height:14px;background:#454545;border:1px solid #3a3a3a"></div>
<svg style="left:1513px;top:792px;" width="20" height="18" viewBox="0 0 20 18"><rect x="0.6" y="0.6" width="18.8" height="12.8" fill="none" stroke="#d2d2d2" stroke-width="1.2"/><path d="M10 13.5V17M5 17.4H15" stroke="#d2d2d2" stroke-width="1.2"/><circle cx="10" cy="7" r="1" fill="#d2d2d2"/></svg>
</body></html>
